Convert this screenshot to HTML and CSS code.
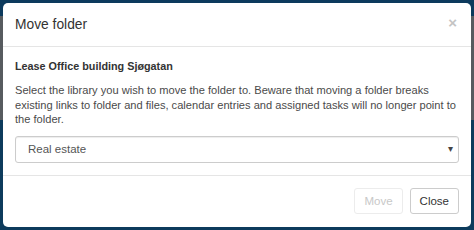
FILE: index.html
```html
<!DOCTYPE html>
<html>
<head>
    <title>Move folder</title>
    <link rel="stylesheet" href="styles.css">
</head>
<body>
    <div class="modal">
        <div class="modal-header">
            <h4 class="modal-title">Move folder</h4>
            <span class="close">&times;</span>
        </div>
        <div class="modal-body">
            <div class="folder-name">Lease Office building Sjøgatan</div>
            <p class="help">Select the library you wish to move the folder to. Beware that moving a folder breaks existing links to folder and files, calendar entries and assigned tasks will no longer point to the folder.</p>
            <div class="select-wrap">
                <select class="library-select">
                    <option>Real estate</option>
                </select>
                <span class="caret">&#9662;</span>
            </div>
        </div>
        <div class="modal-footer">
            <button class="btn" disabled>Move</button>
            <button class="btn">Close</button>
        </div>
    </div>
</body>
</html>
```

FILE: styles.css
```css
html, body {
    height: 100%;
}

body {
    margin: 0;
    padding: 3px;
    box-sizing: border-box;
    font-family: "Liberation Sans", Arial, sans-serif;
    color: #333;
    background: linear-gradient(to bottom,
        #0c3a5d 0, #0c3a5d 16px,
        #575b5f 16px, #575b5f 120px,
        #0d3b5c 120px);
}

.modal {
    background: #fff;
    border-radius: 5px;
    height: 224px;
    display: flex;
    flex-direction: column;
}

.modal-header {
    display: flex;
    align-items: center;
    justify-content: space-between;
    height: 44px;
    padding: 0 12px;
    border-bottom: 1px solid #e5e5e5;
    box-sizing: border-box;
}

.modal-title {
    margin: 0;
    font-size: 13.8px;
    font-weight: normal;
    color: #333;
}

.close {
    color: #c4c4c4;
    font-size: 15px;
    font-weight: bold;
    margin-top: -4px;
    margin-right: 2px;
}

.modal-body {
    padding: 13px 12px 12px 12px;
    flex: 1;
}

.folder-name {
    font-weight: bold;
    font-size: 10.8px;
    line-height: 13px;
}

.help {
    margin: 10px 0 9px 0;
    font-size: 11.1px;
    line-height: 14.5px;
    color: #4a4a4a;
}

.select-wrap {
    position: relative;
}

.library-select {
    -webkit-appearance: none;
    appearance: none;
    display: block;
    width: 100%;
    height: 27px;
    padding: 0 12px;
    font-family: "Liberation Sans", Arial, sans-serif;
    font-size: 11.5px;
    color: #555;
    background: #fff;
    border: 1px solid #ccc;
    border-radius: 3px;
    box-shadow: inset 0 1px 1px rgba(0, 0, 0, 0.075);
}

.caret {
    position: absolute;
    right: 6px;
    top: 7px;
    font-size: 10px;
    color: #444;
}

.modal-footer {
    display: flex;
    justify-content: flex-end;
    gap: 7px;
    padding: 12px 12px 13px 12px;
    border-top: 1px solid #e5e5e5;
}

.btn {
    height: 26px;
    padding: 0 9px;
    font-family: "Liberation Sans", Arial, sans-serif;
    font-size: 11.5px;
    color: #333;
    background: #fff;
    border: 1px solid #ccc;
    border-radius: 3px;
}

.btn:disabled {
    color: #c8c8c8;
    border-color: #ececec;
}
```
